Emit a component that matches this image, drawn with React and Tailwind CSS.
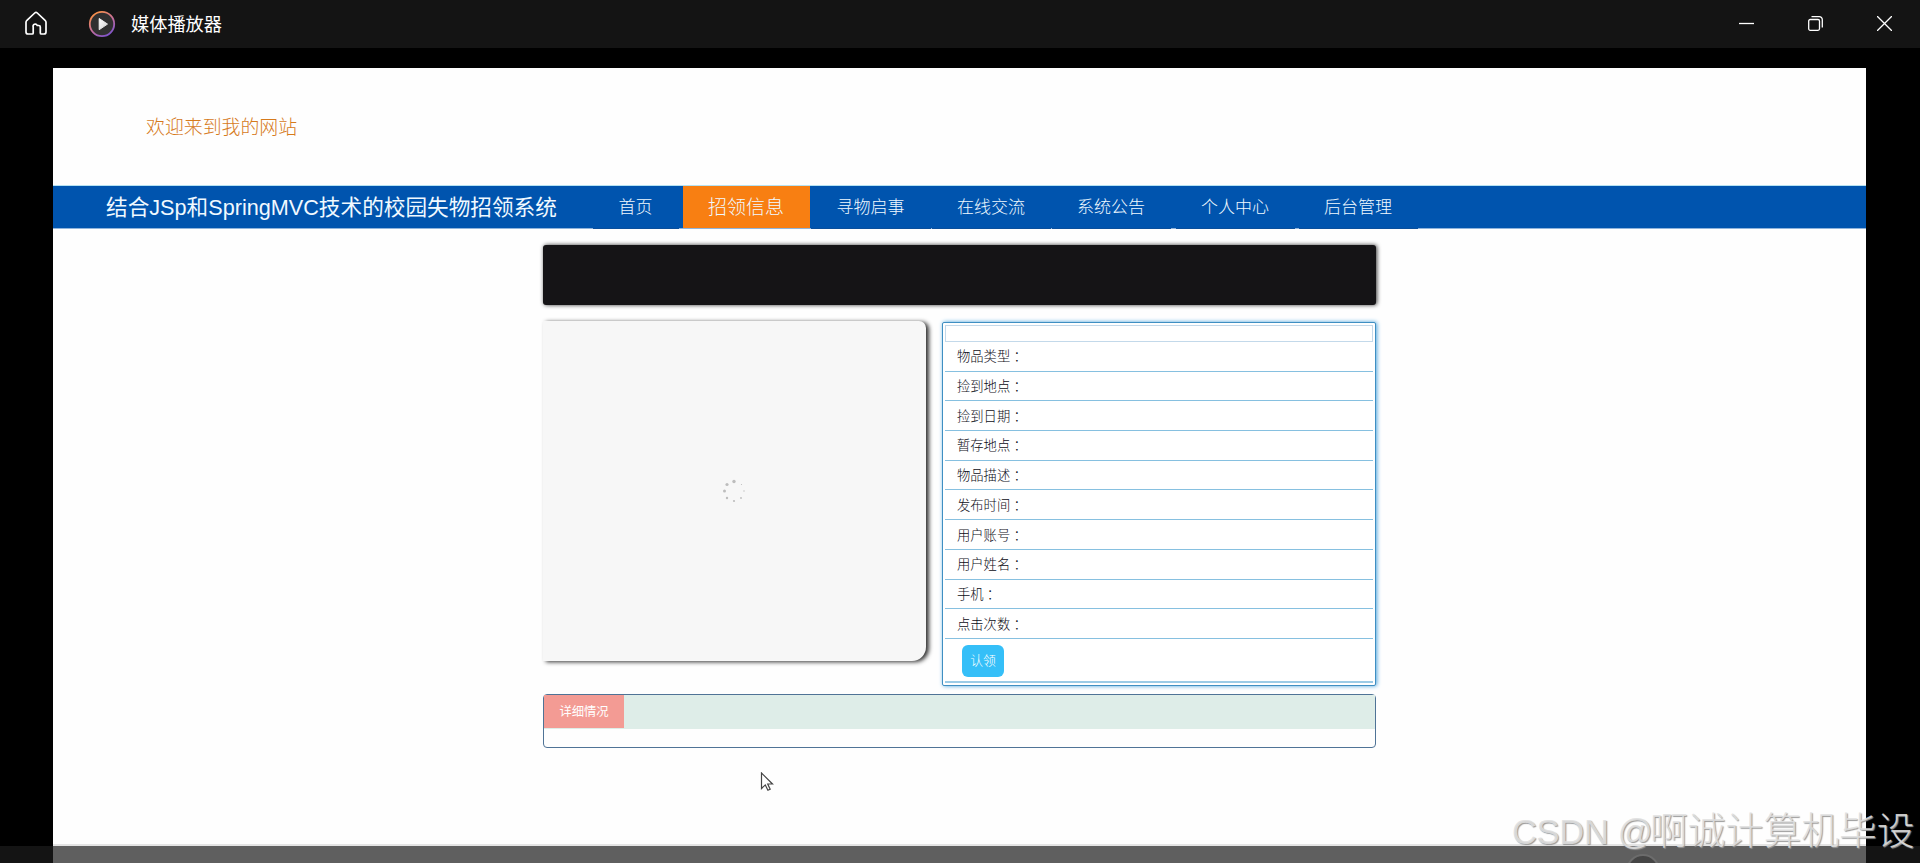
import React from 'react';

const CJK = "font-['Liberation_Sans','Noto_Sans_CJK_SC',sans-serif]";

const tabs = [
  { label: '首页', cell: 'w-[86px] mr-[4px]' },
  { label: '招领信息', active: true },
  { label: '寻物启事', cell: 'w-[120px] ml-[1px] mr-[1px]' },
  { label: '在线交流', cell: 'w-[119px] mr-[1px]' },
  { label: '系统公告', cell: 'w-[119px] mr-[5px]' },
  { label: '个人中心', cell: 'w-[119px] mr-[4px]' },
  { label: '后台管理', cell: 'w-[119px]' },
];

const fields = ['物品类型', '捡到地点', '捡到日期', '暂存地点', '物品描述', '发布时间', '用户账号', '用户姓名', '手机', '点击次数'];

function TitleBar() {
  return (
    <header className="flex h-12 shrink-0 items-center bg-[#141414] text-white">
      <svg className="mb-[2px] ml-6 h-6 w-6" viewBox="0 0 24 24" fill="none" stroke="currentColor" strokeWidth="1.7" strokeLinejoin="round">
        <path d="M2 11.200a2.500 2.500 0 0 1 .9-1.900L10.700 2a1.900 1.900 0 0 1 2.600 0l7.800 7.300a2.500 2.500 0 0 1 .9 1.900V21a2 2 0 0 1-2 2h-2.700a1 1 0 0 1-1-1v-6a1.500 1.500 0 0 0-1.500-1.500h-1.600A1.500 1.500 0 0 0 9.200 16v6a1 1 0 0 1-1 1H4a2 2 0 0 1-2-2Z" />
      </svg>
      <svg className="ml-10 h-7 w-7" viewBox="0 0 28 28">
        <defs>
          <linearGradient id="ring" x1="0.2" y1="0" x2="0.8" y2="1">
            <stop offset="0" stopColor="#ff9440" />
            <stop offset="0.5" stopColor="#c8709a" />
            <stop offset="1" stopColor="#7a52d0" />
          </linearGradient>
          <linearGradient id="play" x1="0" y1="0" x2="1" y2="1">
            <stop offset="0" stopColor="#ffffff" />
            <stop offset="1" stopColor="#cfcfcf" />
          </linearGradient>
        </defs>
        <circle cx="14" cy="14" r="12.200" fill="#303030" stroke="url(#ring)" strokeWidth="1.800" />
        <path d="M11.200 8.500v11.200l8.300-5.600Z" fill="url(#play)" stroke="url(#play)" strokeLinejoin="round" />
      </svg>
      <span className="mt-[2px] ml-[15px] text-[18.200px] leading-6">媒体播放器</span>
      <div className="mb-px ml-auto flex items-center gap-[54px] pr-[28px]">
        <svg className="h-[15px] w-[15px]" viewBox="0 0 15 15" stroke="currentColor" strokeWidth="1.300"><path d="M0 7.500h15" /></svg>
        <svg className="h-[15px] w-[15px]" viewBox="0 0 15 15" fill="none" stroke="currentColor" strokeWidth="1.300">
          <rect x="0.700" y="3.500" width="10.800" height="10.800" rx="1.500" />
          <path d="M3.500.700h7.800a3 3 0 0 1 3 3v7.800" />
        </svg>
        <svg className="h-[15px] w-[15px]" viewBox="0 0 15 15" stroke="currentColor" strokeWidth="1.300"><path d="M0 0l15 15M15 0L0 15" /></svg>
      </div>
    </header>
  );
}

function NavBar() {
  return (
    <nav className="flex h-[44px] items-start border-t border-b border-t-[#b5e2f2] border-b-[#8fb4dc] bg-[#0054ae] text-[#f0f9ff]">
      <h1 className="ml-[53px] w-[487px] shrink-0 text-[21.650px] leading-[44px] whitespace-nowrap">结合JSp和SpringMVC技术的校园失物招领系统</h1>
      {tabs.map((t) =>
        t.active ? (
          <a key={t.label} className="h-[42px] w-[127px] shrink-0 bg-[#f87f12] pr-px text-center text-[19px] leading-[43px] font-light">{t.label}</a>
        ) : (
          <a key={t.label} className={'h-[43px] shrink-0 border-b border-[#0a4f9c] bg-[#0054ae] pr-px text-center text-[17px] leading-[44px] font-light ' + t.cell}>{t.label}</a>
        )
      )}
    </nav>
  );
}

function Spinner() {
  const dots = [[0, -9.500, 1.700], [-7, -6.500, 1.600], [-9.500, 0, 1.500], [-7, 7, 1.200], [0, 10, 1.100], [7, 7, 0.900], [10, 0, 0.700], [7.500, -6.500, 0.600]];
  return (
    <svg className="mr-px h-6 w-6" viewBox="-12 -12 24 24" fill="#bdbdbd">
      {dots.map(([x, y, r], i) => <circle key={i} cx={x} cy={y} r={r} />)}
    </svg>
  );
}

function ItemInfo() {
  return (
    <section className="mt-px flex h-[364px] w-[434px] flex-col rounded-[2px] border border-[#3f8fc2] bg-white px-[2px] pt-[2px] shadow-[1px_0_4px_#4aa3dd]">
      <div className="h-[17px] shrink-0 border border-[#c3d9ea]" />
      {fields.map((f) => (
        <div key={f} className="flex h-[29.700px] shrink-0 items-center border-b border-[#86c0e0] pt-[2px] pl-[12px] text-[13.300px] font-light text-[#0c0c16]">
          <span>{f}</span>
          <span className="font-['Noto_Sans_CJK_TC',sans-serif]">：</span>
        </div>
      ))}
      <div className="mb-[2px] flex flex-1 items-start border-b-2 border-[#9bcbe6] pt-[6px] pl-[17px]">
        <button className="h-8 w-[42px] rounded-md bg-[#35bff8] text-[12.800px] font-light text-white">认领</button>
      </div>
    </section>
  );
}

export default function App() {
  return (
    <div className={'relative flex h-[863px] w-[1920px] flex-col overflow-hidden bg-black ' + CJK}>
      <TitleBar />
      <main className="mt-5 ml-[53px] w-[1813px] flex-1 bg-[#fefefe]">
        <div className="flex h-[117px] items-center pt-[3px] pl-[93px] text-[18.900px] font-light text-[#d67a1c]">欢迎来到我的网站</div>
        <NavBar />
        <div className="ml-[490px] w-[833px] pt-[16px]">
          <div className="h-[60px] rounded-[3px] bg-[#151416] shadow-[1px_0_4px_#333]" />
          <div className="mt-4 flex items-start justify-between">
            <div className="flex h-[340px] w-[383px] items-center justify-center rounded-tr-[7px] rounded-br-[14px] bg-[#f7f7f7] shadow-[3px_1px_4px_#333]">
              <Spinner />
            </div>
            <ItemInfo />
          </div>
          <section className="mt-2 h-[54px] rounded-[4px] border border-[#4f7396]">
            <div className="flex h-[34px] bg-[#deede8]">
              <div className="h-[33px] w-[80px] bg-[#f39b94] text-center text-[12.300px] leading-[35px] text-white">详细情况</div>
            </div>
          </section>
        </div>
      </main>
      <svg className="absolute top-[772px] left-[760px] h-5 w-4" viewBox="0 0 16 20" fill="#fff" stroke="#444" strokeWidth="1.200">
        <path d="M1.500 1v15.500l3.800-3.600 2.600 5.400 2.300-1.100-2.500-5.200h4.800Z" />
      </svg>
      <footer className="absolute top-[844px] left-0 h-[19px] w-full overflow-hidden">
        <div className="ml-[53px] h-[2px] w-[1813px] bg-[#e4e4e4]" />
        <div className="h-[17px] bg-[#141414]">
          <div className="ml-[53px] h-full w-[1813px] bg-[#5f5f5f]" />
        </div>
        <div className="absolute top-[10px] left-[1626px] h-[34px] w-[34px] rounded-full border-2 border-[#6c6c6c] bg-[#454545]" />
      </footer>
      <div className="absolute top-[805px] left-[1512px] flex items-baseline leading-[52px] font-light whitespace-nowrap text-[#e0e0e0]/90 [text-shadow:1px_1px_1px_#999]">
        <span className="w-[138px] text-[34.500px] tracking-[-0.300px] whitespace-pre">CSDN @</span>
        <span className="text-[37.800px]">啊诚计算机毕设</span>
      </div>
    </div>
  );
}
